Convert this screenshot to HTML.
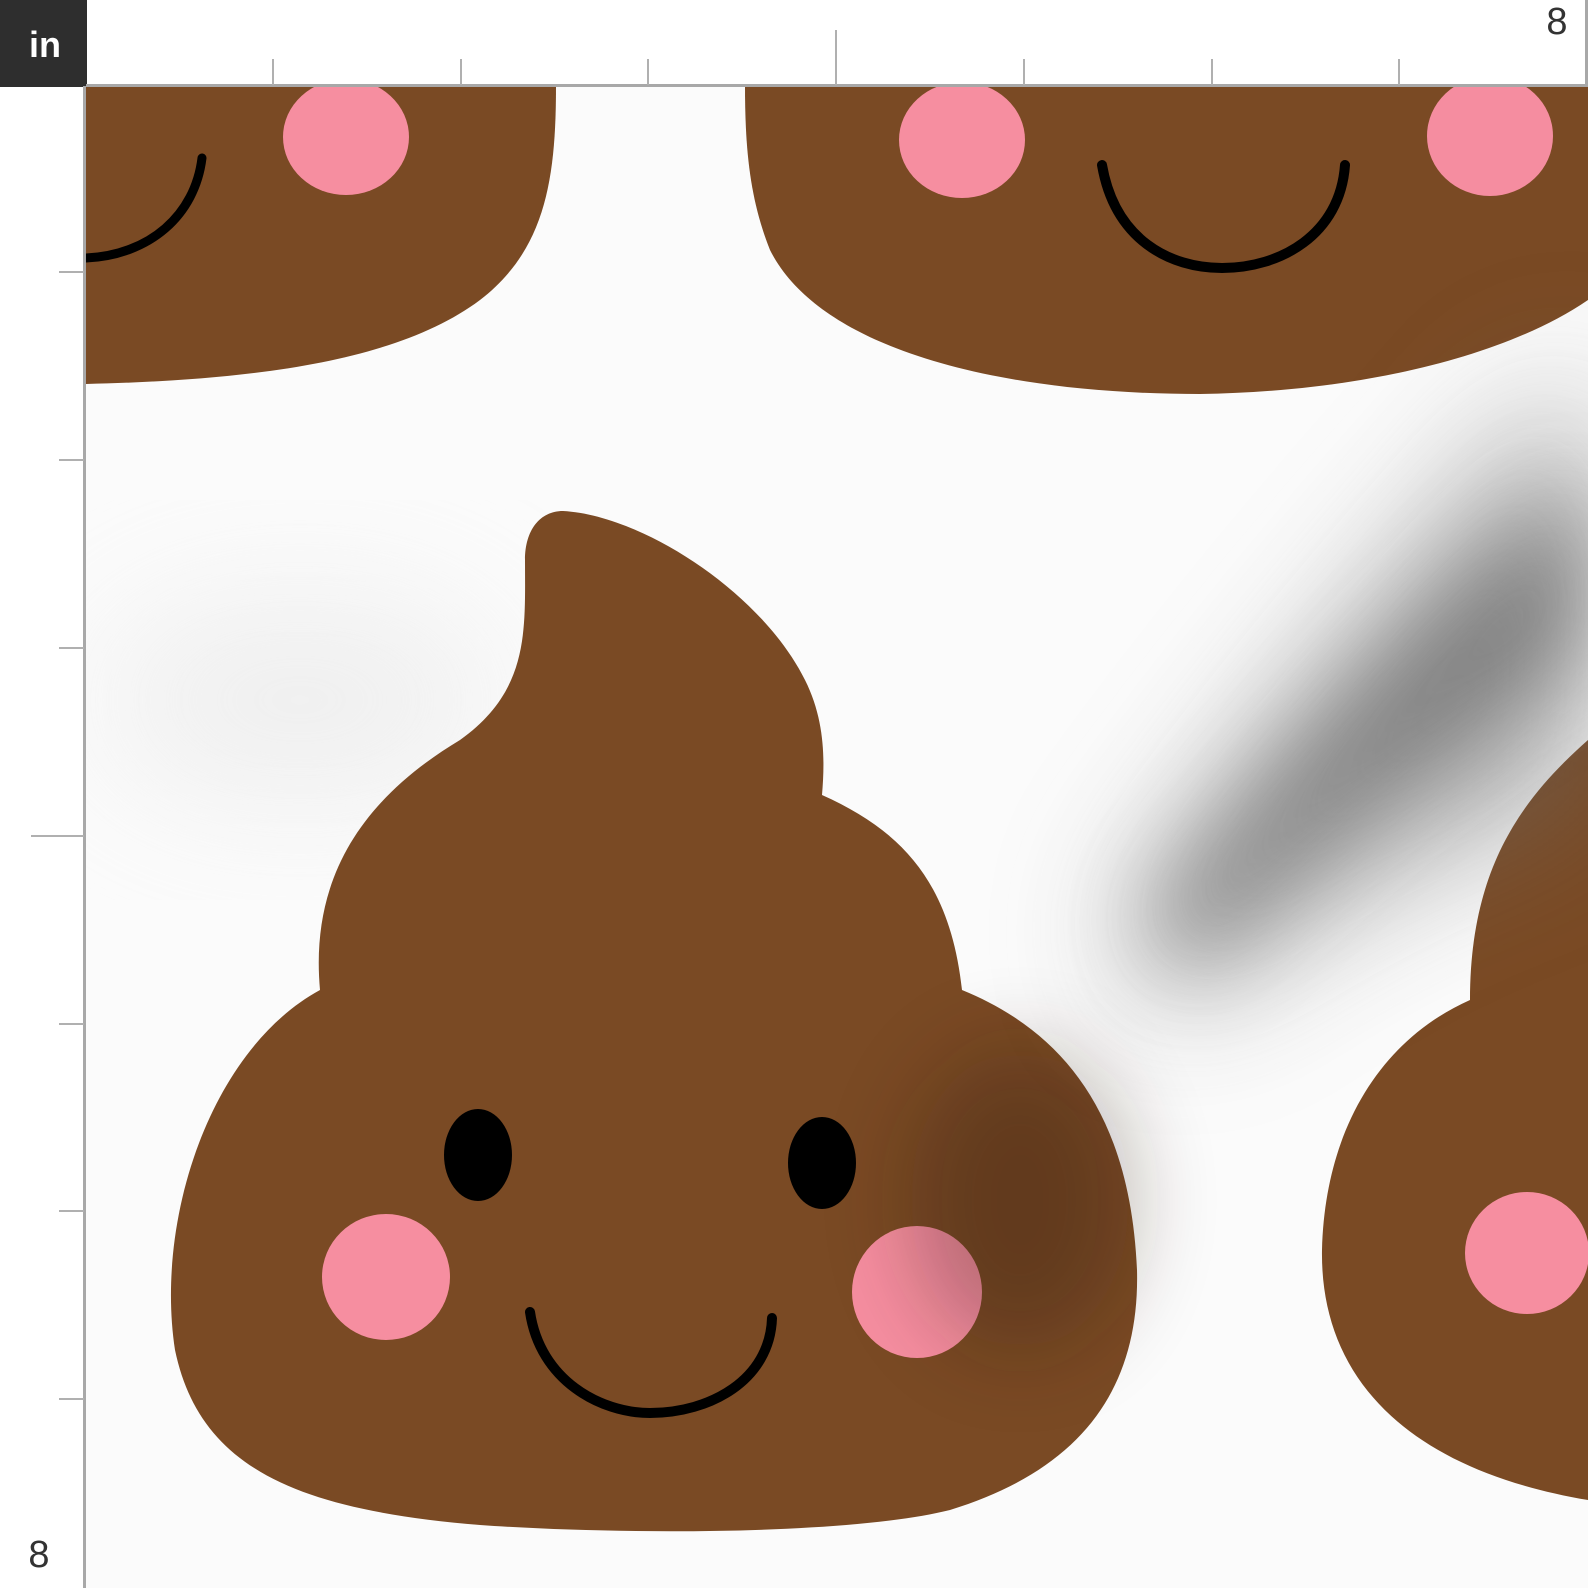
<!DOCTYPE html>
<html><head><meta charset="utf-8"><style>
html,body{margin:0;padding:0;background:#fff;}
svg{display:block}
</style></head><body>
<svg width="1588" height="1588" viewBox="0 0 1588 1588" xmlns="http://www.w3.org/2000/svg">
<defs>
<filter id="b" x="-50%" y="-50%" width="200%" height="200%"><feGaussianBlur stdDeviation="45"/></filter>
<filter id="b2" x="-50%" y="-50%" width="200%" height="200%"><feGaussianBlur stdDeviation="70"/></filter>
<clipPath id="c"><rect x="86" y="86" width="1502" height="1502"/></clipPath>
</defs>
<rect width="1588" height="1588" fill="#fff"/>
<g clip-path="url(#c)">
<rect x="86" y="86" width="1502" height="1502" fill="#fbfbfb"/>
<ellipse cx="300" cy="700" rx="200" ry="100" fill="#e6e6e6" filter="url(#b2)" opacity="0.6"/>
<!-- top-left poop -->
<path d="M86 86 L556 86 C556 180 545 250 480 300 C400 360 260 380 86 384 Z" fill="#7a4a24"/>
<ellipse cx="346" cy="137" rx="63" ry="58" fill="#f68ea0"/>
<path d="M202 158 C195 215 150 255 86 258" stroke="#000" stroke-width="9" fill="none" stroke-linecap="round"/>
<!-- top-right poop -->
<path d="M745 86 L1588 86 L1588 300 C1500 360 1350 392 1200 394 C1000 394 820 350 770 250 C750 200 745 150 745 86 Z" fill="#7a4a24"/>
<ellipse cx="962" cy="140" rx="63" ry="58" fill="#f68ea0"/>
<ellipse cx="1490" cy="136" rx="63" ry="60" fill="#f58da0"/>
<path d="M1102 165 C1115 240 1170 268 1222 268 C1280 268 1340 235 1345 165" stroke="#000" stroke-width="10" fill="none" stroke-linecap="round"/>
<!-- main poop -->
<path d="M563 511 C640 515 760 590 805 680 C825 720 825 760 822 795 C900 830 950 880 962 990 C1060 1030 1130 1110 1137 1270 C1140 1390 1080 1470 950 1510 C850 1535 620 1535 480 1525 C300 1510 200 1470 175 1350 C155 1220 210 1050 320 990 C310 880 360 800 460 740 C530 690 525 630 525 560 C525 530 540 511 563 511 Z" fill="#7a4a24"/>
<ellipse cx="478" cy="1155" rx="34" ry="46" fill="#000"/>
<ellipse cx="822" cy="1163" rx="34" ry="46" fill="#000"/>
<ellipse cx="386" cy="1277" rx="64" ry="63" fill="#f68ea0"/>
<ellipse cx="917" cy="1292" rx="65" ry="66" fill="#f68ea0"/>
<path d="M530 1312 C540 1380 600 1413 650 1413 C710 1413 770 1380 772 1318" stroke="#000" stroke-width="10" fill="none" stroke-linecap="round"/>
<!-- right poop -->
<path d="M1588 740 C1520 800 1470 870 1470 1000 C1380 1040 1325 1130 1322 1250 C1320 1380 1410 1470 1588 1500 Z" fill="#7a4a24"/>
<ellipse cx="1527" cy="1253" rx="62" ry="61" fill="#f68ea0"/>
<!-- fold shadow -->
<path d="M1588 360 L1588 800 C1450 830 1300 920 1170 1010 L1120 930 C1280 700 1440 520 1588 360 Z" fill="#6a6a6a" filter="url(#b2)" opacity="0.55"/>
<path d="M1588 470 C1450 600 1300 740 1150 920 L1190 970 C1330 830 1460 720 1588 650 Z" fill="#555" filter="url(#b)" opacity="0.55"/>
<ellipse cx="1020" cy="1200" rx="110" ry="150" fill="#2a1608" filter="url(#b)" opacity="0.3"/>
</g>
<!-- rulers -->
<rect x="0" y="0" width="87" height="87" fill="#2e2e2e"/>
<text x="45" y="57" font-family="Liberation Sans, sans-serif" font-size="36" font-weight="bold" fill="#fff" text-anchor="middle">in</text>
<rect x="86" y="84" width="1502" height="3" fill="#a8a8a8"/>
<rect x="83" y="86" width="3" height="1502" fill="#a8a8a8"/>
<rect x="1585" y="0" width="3" height="86" fill="#a8a8a8"/>
<g stroke="#b0b0b0" stroke-width="2">
<line x1="273" y1="59" x2="273" y2="85"/><line x1="461" y1="59" x2="461" y2="85"/><line x1="648" y1="59" x2="648" y2="85"/>
<line x1="836" y1="30" x2="836" y2="85"/><line x1="1024" y1="59" x2="1024" y2="85"/><line x1="1212" y1="59" x2="1212" y2="85"/><line x1="1399" y1="59" x2="1399" y2="85"/>
<line x1="59" y1="272" x2="84" y2="272"/><line x1="59" y1="460" x2="84" y2="460"/><line x1="59" y1="648" x2="84" y2="648"/>
<line x1="31" y1="836" x2="84" y2="836"/><line x1="59" y1="1024" x2="84" y2="1024"/><line x1="59" y1="1211" x2="84" y2="1211"/><line x1="59" y1="1399" x2="84" y2="1399"/>
</g>
<text x="1557" y="34" font-family="Liberation Sans, sans-serif" font-size="38" fill="#333" text-anchor="middle">8</text>
<text x="39" y="1567" font-family="Liberation Sans, sans-serif" font-size="38" fill="#333" text-anchor="middle">8</text>
</svg>
</body></html>
